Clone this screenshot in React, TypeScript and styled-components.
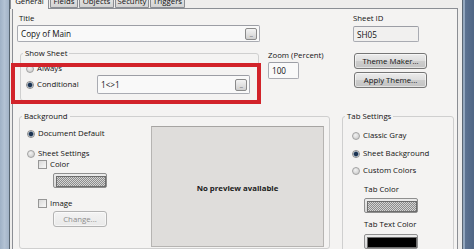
import React from "react";
import styled, { createGlobalStyle } from "styled-components";

const GlobalStyle = createGlobalStyle`
  html, body { margin: 0; padding: 0; background: #f0efee; overflow: hidden; }
  * { box-sizing: border-box; }
`;

const FONT = `"Open Sans", "Noto Sans", "Liberation Sans", sans-serif`;

const Screen = styled.div`
  width: 474px;
  height: 249px;
  overflow: hidden;
  display: flex;
  font-family: ${FONT};
  font-size: 7.8px;
  color: #111;
`;

const WindowEdge = styled.div<{ $side: "left" | "right" }>`
  flex: none;
  width: ${(p) => (p.$side === "left" ? "10px" : "11px")};
  border-right: ${(p) => (p.$side === "left" ? "1px solid #56636f" : "none")};
  background: ${(p) =>
    p.$side === "left"
      ? "linear-gradient(90deg, #9fb1c6 0%, #b3c2d4 50%, #a2b3c7 100%)"
      : "linear-gradient(90deg, #93a7be 0 2px, #5d7392 2px, #4f6584 100%)"};
`;

const Dialog = styled.div`
  flex: 1;
  display: flex;
  flex-direction: column;
  padding: 0 4px 0 2px;
  background: #eeedec;
  border-right: 1px solid #5a6673;
`;

const TabStrip = styled.div`
  flex: none;
  display: flex;
  align-items: flex-end;
  height: 18px;
  margin-top: -10px;
  position: relative;
  z-index: 1;
`;

const Tab = styled.div<{ $active?: boolean; $w: number }>`
  flex: none;
  width: ${(p) => p.$w}px;
  height: ${(p) => (p.$active ? 19 : 16)}px;
  margin-left: ${(p) => (p.$active ? -2 : 1)}px;
  margin-bottom: ${(p) => (p.$active ? -1 : 0)}px;
  border: 1px solid #8b8e94;
  border-bottom: ${(p) => (p.$active ? "none" : "1px solid #8b8e94")};
  border-radius: 2px 2px 0 0;
  background: ${(p) =>
    p.$active ? "#f4f3f2" : "linear-gradient(180deg, #ececec 0%, #dedede 60%, #d3d3d3 100%)"};
  display: flex;
  align-items: flex-end;
  justify-content: center;
  padding-bottom: ${(p) => (p.$active ? 2 : 0)}px;
  line-height: 11px;
`;

const Page = styled.div`
  position: relative;
  flex: none;
  height: 262px;
  border: 1px solid #8b8e94;
  background: #f4f3f2;
  padding: 4px 0 0 4px;
  display: flex;
  flex-direction: column;
`;

const TopRow = styled.div`
  flex: none;
  display: flex;
  align-items: flex-start;
`;

const Column = styled.div<{ $w: number; $ml?: number }>`
  flex: none;
  width: ${(p) => p.$w}px;
  margin-left: ${(p) => p.$ml ?? 0}px;
  display: flex;
  flex-direction: column;
  align-items: flex-start;
`;

const FieldLabel = styled.div<{ $mt?: number; $ml?: number }>`
  line-height: 11px;
  height: 11px;
  margin-top: ${(p) => p.$mt ?? 0}px;
  margin-left: ${(p) => p.$ml ?? 0}px;
  white-space: nowrap;
`;

const TextBox = styled.div<{ $w: number; $h?: number; $mt?: number; $ml?: number; $readOnly?: boolean }>`
  flex: none;
  width: ${(p) => p.$w}px;
  height: ${(p) => p.$h ?? 17}px;
  margin-top: ${(p) => p.$mt ?? 0}px;
  margin-left: ${(p) => p.$ml ?? 0}px;
  border: 1px solid #a9abb2;
  border-top-color: #9c9ea5;
  border-radius: 2px;
  background: ${(p) => (p.$readOnly ? "#f1f0ef" : "#f9f9f9")};
  display: flex;
  align-items: center;
  padding: 0 1px 0 3px;
  white-space: nowrap;
  font-size: 8.2px;
`;

const EllipsisButton = styled.div`
  flex: none;
  margin-left: auto;
  margin-right: 1px;
  width: 12px;
  height: 12px;
  border: 1px solid #8a8a8a;
  border-radius: 2px;
  background: linear-gradient(180deg, #f3f3f3 0%, #e2e2e2 50%, #cfcfcf 100%);
  display: flex;
  align-items: flex-end;
  justify-content: center;
  font-size: 6px;
  line-height: 6px;
  color: #444;
  padding-bottom: 1px;
  letter-spacing: -0.5px;
`;

const PushButton = styled.div<{ $mt?: number; $ml?: number; $w: number; $disabled?: boolean }>`
  flex: none;
  width: ${(p) => p.$w}px;
  height: 16px;
  margin-top: ${(p) => p.$mt ?? 0}px;
  margin-left: ${(p) => p.$ml ?? 0}px;
  border: 1px solid ${(p) => (p.$disabled ? "#b3b3b3" : "#767676")};
  border-radius: 3px;
  background: ${(p) =>
    p.$disabled
      ? "linear-gradient(180deg, #f3f3f3 0%, #e9e9e9 100%)"
      : "linear-gradient(180deg, #ececec 0%, #dedede 48%, #cdcdcd 52%, #c3c3c3 100%)"};
  box-shadow: inset 0 0 0 1px rgba(255, 255, 255, 0.55);
  color: ${(p) => (p.$disabled ? "#8c8c8c" : "#111")};
  display: flex;
  align-items: center;
  justify-content: center;
  white-space: nowrap;
  line-height: 11px;
`;

const Group = styled.fieldset<{ $w: number; $h?: number; $mt?: number; $ml?: number }>`
  flex: none;
  width: ${(p) => p.$w}px;
  ${(p) => (p.$h ? `height: ${p.$h}px;` : "")}
  margin: ${(p) => p.$mt ?? 0}px 0 0 ${(p) => p.$ml ?? 0}px;
  padding: 0;
  border: 1px solid #cfcfcf;
  border-radius: 3px;
  min-width: 0;
`;

const Legend = styled.legend`
  margin-left: 2px;
  padding: 0 2px;
  line-height: 11px;
  height: 11px;
  white-space: nowrap;
`;

const OptionRow = styled.div<{ $mt?: number; $ml?: number; $h?: number }>`
  display: flex;
  align-items: center;
  gap: 3px;
  height: ${(p) => p.$h ?? 11}px;
  margin-top: ${(p) => p.$mt ?? 0}px;
  margin-left: ${(p) => p.$ml ?? 0}px;
  white-space: nowrap;
  line-height: 11px;
`;

const OptionText = styled.span<{ $minW?: number }>`
  ${(p) => (p.$minW ? `min-width: ${p.$minW}px;` : "")}
`;

const Radio = styled.span<{ $checked?: boolean }>`
  flex: none;
  width: 8px;
  height: 8px;
  border-radius: 50%;
  border: 1px solid ${(p) => (p.$checked ? "#8a8a8a" : "#a2a2a2")};
  background: ${(p) =>
    p.$checked
      ? "radial-gradient(circle at 50% 50%, #1d3350 0 1.6px, #4f6f92 2.2px, #dcdcdc 2.9px, #c7c7c7 100%)"
      : "radial-gradient(circle at 40% 35%, #f2f2f2 0%, #d7d7d7 60%, #c4c4c4 100%)"};
`;

const CheckBox = styled.span`
  flex: none;
  width: 9px;
  height: 9px;
  border: 1px solid #969696;
  background: linear-gradient(135deg, #d9d9d9 0%, #efefef 70%, #f7f7f7 100%);
`;

const Swatch = styled.div<{ $mt?: number; $ml?: number; $black?: boolean }>`
  flex: none;
  width: 54px;
  height: 15px;
  margin-top: ${(p) => p.$mt ?? 0}px;
  margin-left: ${(p) => p.$ml ?? 0}px;
  border: 1px solid #8f8f8f;
  border-radius: 2px;
  padding: 2px;
  background: linear-gradient(180deg, #ececec, #d6d6d6);
  &::after {
    content: "";
    display: block;
    width: 100%;
    height: 100%;
    border: 1px solid #6d6d6d;
    background: ${(p) =>
      p.$black ? "#000" : "repeating-conic-gradient(#8c8c8c 0 25%, #d4d4d4 0 50%) 0 0 / 2px 2px"};
  }
`;

const GroupBody = styled.div<{ $dir?: "row" | "column"; $pt?: number; $pl?: number }>`
  display: flex;
  flex-direction: ${(p) => p.$dir ?? "column"};
  align-items: flex-start;
  padding-top: ${(p) => p.$pt ?? 0}px;
  padding-left: ${(p) => p.$pl ?? 0}px;
`;

const OptionsColumn = styled.div`
  flex: none;
  width: 123px;
  display: flex;
  flex-direction: column;
  align-items: flex-start;
  padding-top: 6px;
`;

const Preview = styled.div`
  flex: none;
  width: 173px;
  height: 121px;
  margin: 4px 5px 0 auto;
  border: 1px solid #b6b4b2;
  border-top-color: #a6a4a2;
  background: #dfdddb;
  display: flex;
  align-items: center;
  justify-content: center;
  padding-top: 3px;
  font-weight: 700;
  color: #202020;
  white-space: nowrap;
`;

const BottomRow = styled.div`
  flex: none;
  display: flex;
  align-items: flex-start;
  margin-top: 10px;
`;

const Annotation = styled.div`
  position: absolute;
  left: -2px;
  top: 54px;
  width: 250px;
  height: 41px;
  border: 4px solid #d2232a;
  pointer-events: none;
  z-index: 2;
`;

const tabs = [
  { label: "General", w: 39, active: true },
  { label: "Fields", w: 28 },
  { label: "Objects", w: 35 },
  { label: "Security", w: 34 },
  { label: "Triggers", w: 35 },
];

export default function App() {
  return (
    <>
      <GlobalStyle />
      <Screen>
        <WindowEdge $side="left" />
        <Dialog>
          <TabStrip>
            {tabs.map((t) => (
              <Tab key={t.label} $w={t.w} $active={t.active}>
                {t.label}
              </Tab>
            ))}
          </TabStrip>
          <Page>
            <TopRow>
              <Column $w={243}>
                <FieldLabel $ml={2}>Title</FieldLabel>
                <TextBox $w={243} $mt={1}>
                  Copy of Main
                  <EllipsisButton>...</EllipsisButton>
                </TextBox>
                <Group $w={239} $mt={6} $ml={3}>
                  <Legend>Show Sheet</Legend>
                  <GroupBody $pl={5} $pt={4}>
                    <OptionRow>
                      <Radio />
                      <OptionText>Always</OptionText>
                    </OptionRow>
                    <OptionRow $h={19} $mt={1}>
                      <Radio $checked />
                      <OptionText $minW={57}>Conditional</OptionText>
                      <TextBox $w={153} $h={19}>
                        1&lt;&gt;1
                        <EllipsisButton>...</EllipsisButton>
                      </TextBox>
                    </OptionRow>
                    <OptionRow $h={6} />
                  </GroupBody>
                </Group>
              </Column>
              <Column $w={85} $ml={8}>
                <FieldLabel $mt={37}>Zoom (Percent)</FieldLabel>
                <TextBox $w={31} $mt={1}>100</TextBox>
              </Column>
              <Column $w={74}>
                <FieldLabel>Sheet ID</FieldLabel>
                <TextBox $w={66} $h={16} $mt={2} $readOnly>SH05</TextBox>
                <PushButton $w={73} $mt={11} $ml={1}>Theme Maker...</PushButton>
                <PushButton $w={73} $mt={3} $ml={1}>Apply Theme...</PushButton>
              </Column>
            </TopRow>
            <BottomRow>
              <Group $w={311} $h={138} $ml={2}>
                <Legend>Background</Legend>
                <GroupBody $dir="row" $pl={7}>
                  <OptionsColumn>
                    <OptionRow>
                      <Radio $checked />
                      <OptionText>Document Default</OptionText>
                    </OptionRow>
                    <OptionRow $mt={9}>
                      <Radio />
                      <OptionText>Sheet Settings</OptionText>
                    </OptionRow>
                    <OptionRow $ml={11}>
                      <CheckBox />
                      <OptionText>Color</OptionText>
                    </OptionRow>
                    <Swatch $mt={3} $ml={26} />
                    <OptionRow $mt={10} $ml={11}>
                      <CheckBox />
                      <OptionText>Image</OptionText>
                    </OptionRow>
                    <PushButton $w={54} $mt={2} $ml={26} $disabled>
                      Change...
                    </PushButton>
                  </OptionsColumn>
                  <Preview>No preview available</Preview>
                </GroupBody>
              </Group>
              <Group $w={112} $h={150} $ml={12}>
                <Legend>Tab Settings</Legend>
                <GroupBody $pl={9} $pt={8}>
                  <OptionRow>
                    <Radio />
                    <OptionText>Classic Gray</OptionText>
                  </OptionRow>
                  <OptionRow $mt={7}>
                    <Radio $checked />
                    <OptionText>Sheet Background</OptionText>
                  </OptionRow>
                  <OptionRow $mt={6}>
                    <Radio />
                    <OptionText>Custom Colors</OptionText>
                  </OptionRow>
                  <FieldLabel $mt={8} $ml={12}>Tab Color</FieldLabel>
                  <Swatch $mt={3} $ml={12} />
                  <FieldLabel $mt={6} $ml={12}>Tab Text Color</FieldLabel>
                  <Swatch $mt={4} $ml={12} $black />
                </GroupBody>
              </Group>
            </BottomRow>
            <Annotation />
          </Page>
        </Dialog>
        <WindowEdge $side="right" />
      </Screen>
    </>
  );
}
